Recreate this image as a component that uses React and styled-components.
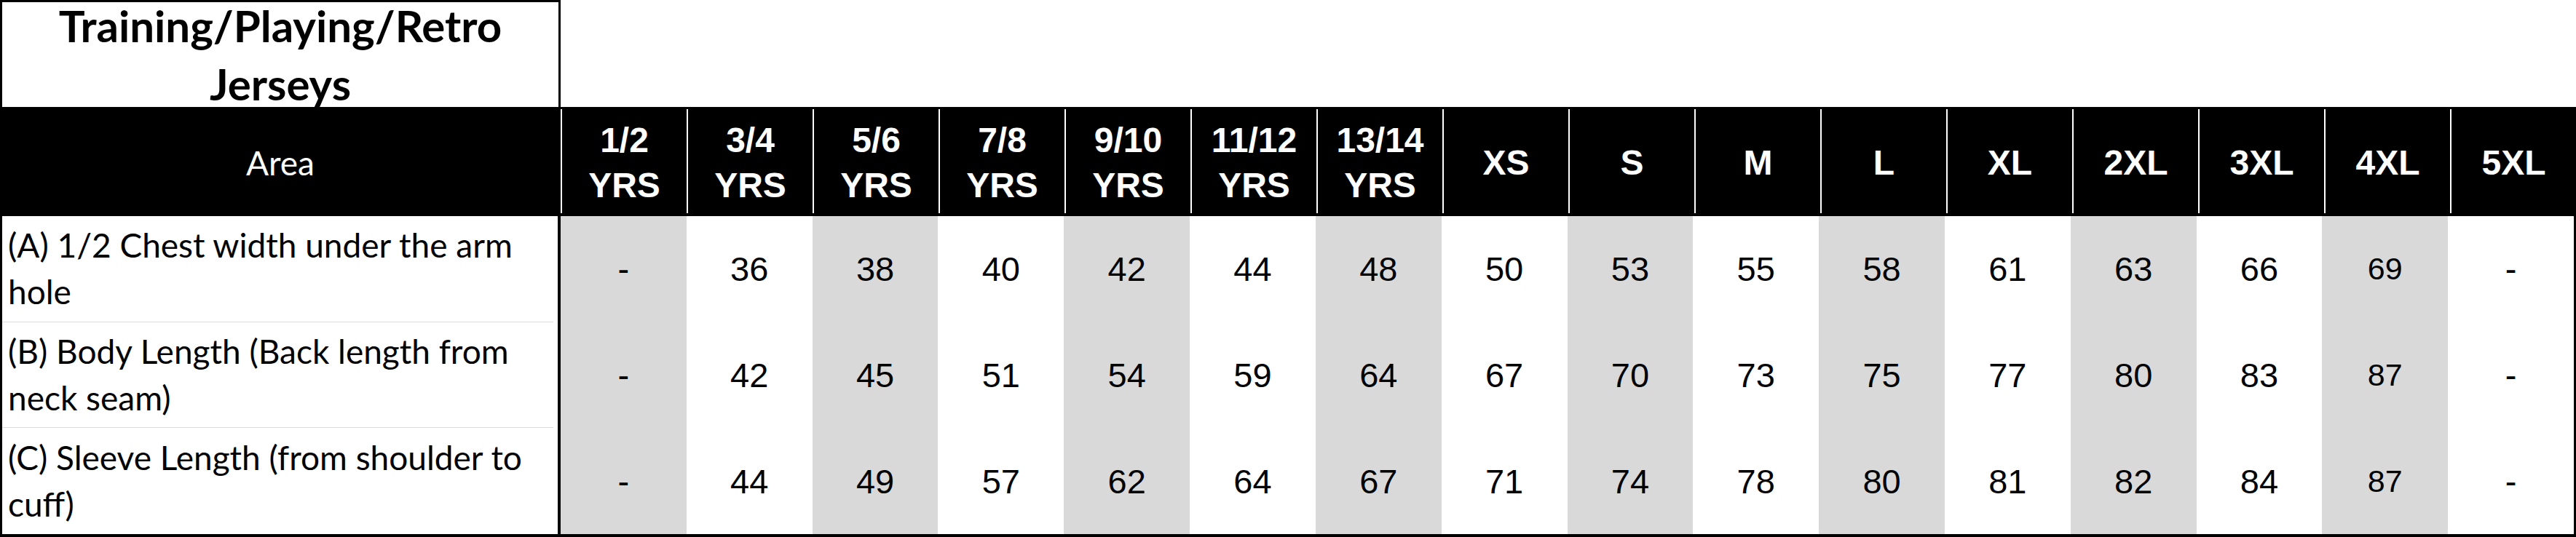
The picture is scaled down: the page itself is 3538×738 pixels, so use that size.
import React from 'react';
import styled, { createGlobalStyle } from 'styled-components';

const GlobalStyle = createGlobalStyle`
  html, body { margin: 0; padding: 0; background: #ffffff; }
  * { box-sizing: border-box; }
`;

const SIZE_COLS = 'repeat(16, 1fr)';

const Sheet = styled.div`
  width: 3538px;
  height: 738px;
  display: flex;
  flex-direction: column;
  background: #ffffff;
  overflow: hidden;
`;

const TitleBar = styled.div`
  display: flex;
  height: 147px;
  flex: none;
`;

const TitleCell = styled.div`
  width: 770px;
  height: 147px;
  border: 3px solid #000;
  border-bottom: none;
  font-family: Lato, "Open Sans", sans-serif;
  font-weight: 700;
  font-size: 60px;
  line-height: 80px;
  text-align: center;
  color: #000;
`;

const TitleText = styled.div`
  margin-top: -8px;
  position: relative;
  z-index: 0;
`;

const HeaderRow = styled.div`
  display: grid;
  grid-template-columns: 770px ${SIZE_COLS};
  height: 150px;
  flex: none;
  background: #000;
  padding: 3px 0 4px;
  position: relative;
  z-index: 1;
`;

const AreaHead = styled.div`
  display: flex;
  align-items: center;
  justify-content: center;
  color: #fff;
  font-family: Lato, "Open Sans", sans-serif;
  font-size: 46px;
  padding-top: 4px;
`;

const SizeHead = styled.div`
  border-left: 2px solid #fff;
  display: flex;
  flex-direction: column;
  align-items: center;
  justify-content: center;
  color: #fff;
  font-family: "Liberation Sans", Arial, sans-serif;
  font-weight: 700;
  font-size: 48px;
  line-height: 62px;
  text-align: center;
  padding-top: 4px;
`;

const Body = styled.div`
  flex: 1;
  display: grid;
  grid-template-columns: 767px ${SIZE_COLS};
  grid-template-rows: repeat(3, 1fr);
  border-left: 3px solid #000;
  border-right: 3px solid #000;
  border-bottom: 4px solid #000;
`;

const LabelCell = styled.div`
  display: flex;
  border-right: 4px solid #000;
`;

const LabelText = styled.div`
  flex: 1;
  display: flex;
  align-items: center;
  margin-right: 6px;
  padding: 0 10px 0 8px;
  border-bottom: ${(p) => (p.$last ? 'none' : '1px solid #dcdcdc')};
  font-family: Lato, "Open Sans", sans-serif;
  font-size: 46px;
  line-height: 64px;
  color: #000;
`;

const ValueCell = styled.div`
  display: flex;
  align-items: center;
  justify-content: center;
  background: ${(p) => (p.$shaded ? '#d9d9d9' : '#ffffff')};
  font-family: "Liberation Sans", Arial, sans-serif;
  font-size: ${(p) => (p.$small ? '43px' : '47px')};
  color: #000;
`;

const sizes = [
  ['1/2', 'YRS'],
  ['3/4', 'YRS'],
  ['5/6', 'YRS'],
  ['7/8', 'YRS'],
  ['9/10', 'YRS'],
  ['11/12', 'YRS'],
  ['13/14', 'YRS'],
  ['XS'],
  ['S'],
  ['M'],
  ['L'],
  ['XL'],
  ['2XL'],
  ['3XL'],
  ['4XL'],
  ['5XL'],
];

const rows = [
  {
    label: '(A) 1/2 Chest width under the arm hole',
    values: ['-', '36', '38', '40', '42', '44', '48', '50', '53', '55', '58', '61', '63', '66', '69', '-'],
  },
  {
    label: '(B) Body Length (Back length from neck seam)',
    values: ['-', '42', '45', '51', '54', '59', '64', '67', '70', '73', '75', '77', '80', '83', '87', '-'],
  },
  {
    label: '(C) Sleeve Length (from shoulder to cuff)',
    values: ['-', '44', '49', '57', '62', '64', '67', '71', '74', '78', '80', '81', '82', '84', '87', '-'],
  },
];

export default function App() {
  return (
    <>
      <GlobalStyle />
      <Sheet>
        <TitleBar>
          <TitleCell>
            <TitleText>Training/Playing/Retro Jerseys</TitleText>
          </TitleCell>
        </TitleBar>
        <HeaderRow>
          <AreaHead>Area</AreaHead>
          {sizes.map((lines, i) => (
            <SizeHead key={i}>
              {lines.map((l) => (
                <span key={l}>{l}</span>
              ))}
            </SizeHead>
          ))}
        </HeaderRow>
        <Body>
          {rows.map((row, r) => (
            <React.Fragment key={r}>
              <LabelCell>
                <LabelText $last={r === rows.length - 1}>{row.label}</LabelText>
              </LabelCell>
              {row.values.map((v, c) => (
                <ValueCell key={c} $shaded={c % 2 === 0} $small={c === 14}>
                  {v}
                </ValueCell>
              ))}
            </React.Fragment>
          ))}
        </Body>
      </Sheet>
    </>
  );
}
